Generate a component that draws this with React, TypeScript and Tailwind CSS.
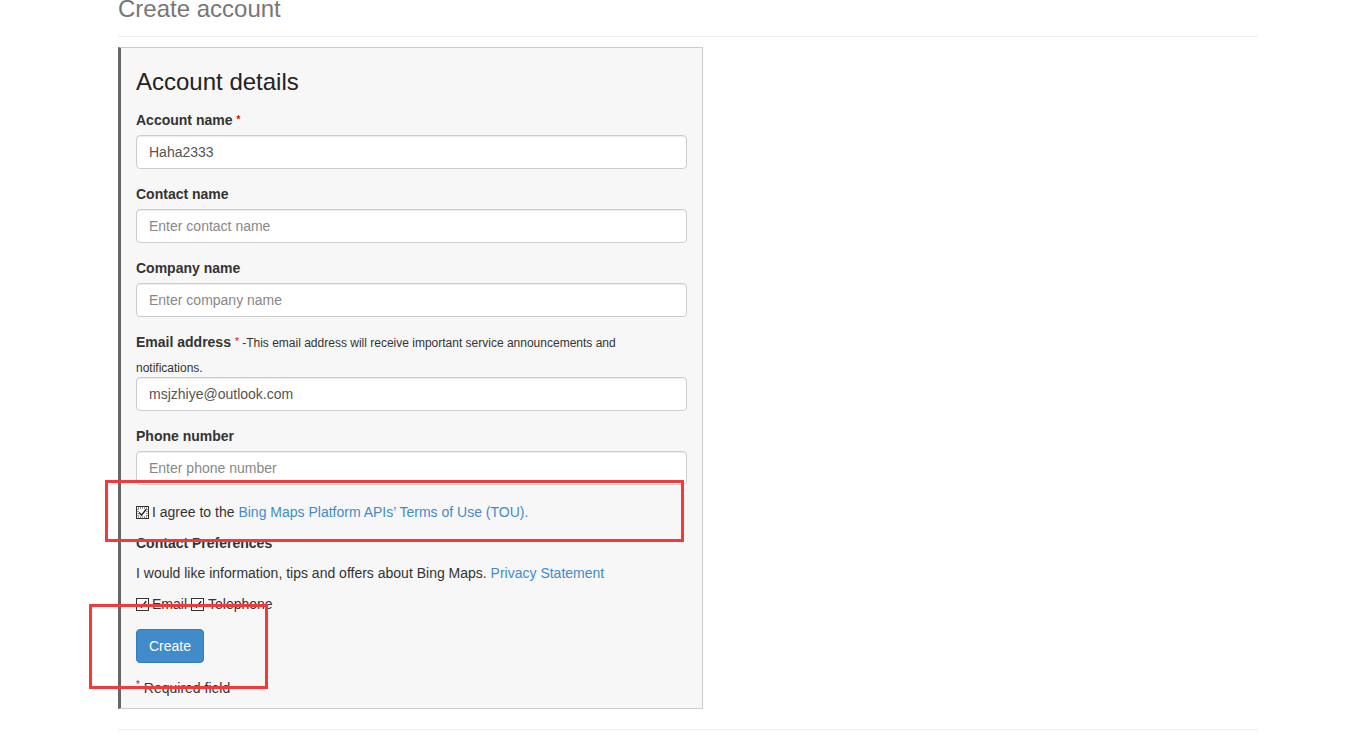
import React from 'react';

const Box = ({ dotted }: { dotted?: boolean }) => (
  <svg width="13" height="13" viewBox="0 0 13 13" className="inline-block shrink-0">
    <rect x="0.5" y="0.5" width="12" height="12" fill="white" stroke="#333" />
    {dotted && (
      <rect x="2" y="2" width="9" height="9" fill="none" stroke="#333" strokeDasharray="1 1" />
    )}
    <path d="M3 6.5 L5.5 9.2 L10.2 3.2" stroke="#222" strokeWidth="1.4" fill="none" />
  </svg>
);

const Req = () => <sup className="text-[#e00] text-[10px] ml-[4px] relative -top-[2px]">*</sup>;

const Input = ({ value, placeholder }: { value?: string; placeholder?: string }) => (
  <input
    defaultValue={value}
    placeholder={placeholder}
    className="block w-full h-[34px] px-[12px] bg-white border border-[#ccc] rounded-[4px] text-[14px] text-[#555] placeholder:text-[#888] outline-none shadow-[inset_0_1px_1px_rgba(0,0,0,0.075)]"
  />
);

const Field = ({ label, value, placeholder, req }: { label: string; value?: string; placeholder?: string; req?: boolean }) => (
  <div className="mb-[15px]">
    <label className="block font-bold leading-[20px] mb-[5px]">
      {label}
      {req && <Req />}
    </label>
    <Input value={value} placeholder={placeholder} />
  </div>
);

export default function App() {
  return (
    <div className="relative min-h-[755px] bg-white text-[14px] text-[#333] font-['Liberation_Sans',Arial,sans-serif] overflow-hidden">
      <div className="ml-[118px] w-[1140px]">
        <h2 className="mt-[-4px] text-[24px] leading-[26px] text-[#777]">Create account</h2>
        <hr className="mt-[14px] border-0 border-t border-[#eee]" />

        <div className="mt-[10px] w-[585px] bg-[#f7f7f7] border border-[#ccc] border-l-[3px] border-l-[#666] pl-[15px] pr-[15px] pt-[21px] pb-[10px]">
          <h3 className="text-[24px] leading-[26px] text-[#222] mb-[15px]">Account details</h3>

          <Field label="Account name" value="Haha2333" req />
          <Field label="Contact name" placeholder="Enter contact name" />
          <div className="mb-[14px]">
            <label className="block font-bold leading-[20px] mb-[5px]">Company name</label>
            <Input placeholder="Enter company name" />
          </div>

          <div className="mb-[15px]">
            <div className="h-[47px] leading-[24px] -mt-[1px]">
              <span className="font-bold">Email address</span>
              <Req />
              <span className="text-[12px]"> -This email address will receive important service announcements and
                <br />
                notifications.
              </span>
            </div>
            <Input value="msjzhiye@outlook.com" />
          </div>

          <div>
            <label className="block font-bold leading-[20px] mb-[5px]">Phone number</label>
            <Input placeholder="Enter phone number" />
          </div>

          <div className="mt-[17px] flex items-center gap-[3px] leading-[20px]">
            <Box dotted />
            <span>
              I agree to the <a className="text-[#428bca]">Bing Maps Platform APIs’ Terms of Use (TOU).</a>
            </span>
          </div>

          <div className="mt-[11px] font-bold leading-[20px]">Contact Preferences</div>
          <div className="mt-[10px] leading-[20px]">
            I would like information, tips and offers about Bing Maps. <a className="text-[#428bca]">Privacy Statement</a>
          </div>
          <div className="mt-[11px] flex items-center leading-[20px]">
            <Box />
            <span className="ml-[3px] mr-[4px]">Email</span>
            <Box />
            <span className="ml-[4px]">Telephone</span>
          </div>

          <button className="mt-[15px] h-[34px] px-[12px] bg-[#428bca] border border-[#357ebd] rounded-[4px] text-white text-[14px]">
            Create
          </button>

          <div className="mt-[15px] leading-[20px]">
            <sup className="text-[#e00] text-[10px]">*</sup> Required field
          </div>
        </div>

        <hr className="mt-[20px] border-0 border-t border-[#eee]" />
      </div>

      <div className="absolute left-[105px] top-[480px] w-[579px] h-[62px] border-[3px] border-[#f23a3a]" />
      <div className="absolute left-[89px] top-[604px] w-[179px] h-[85px] border-[3px] border-[#f23a3a]" />
    </div>
  );
}
